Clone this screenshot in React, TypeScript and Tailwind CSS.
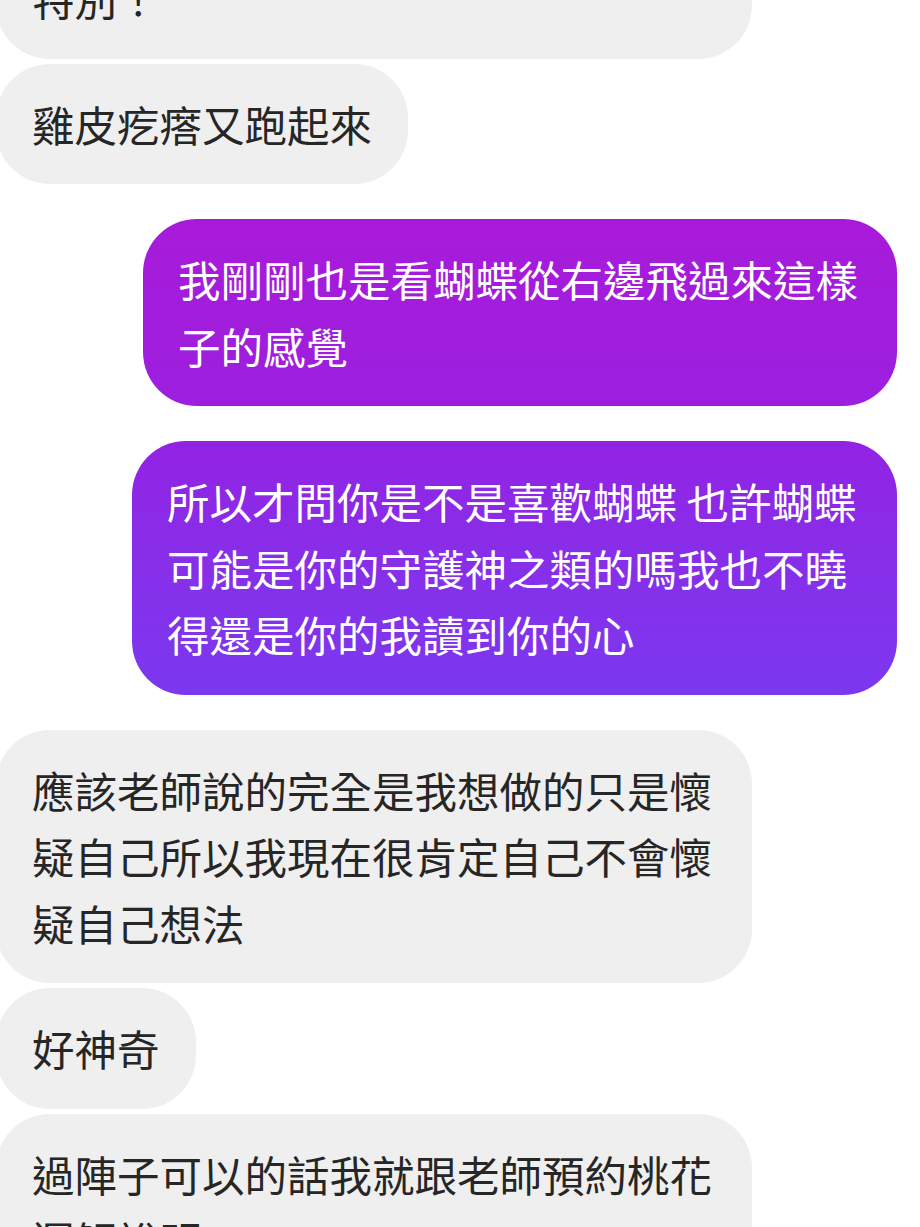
const font = { fontFamily: '"Noto Sans CJK TC", "Noto Sans", sans-serif' };

type Msg = {
  text: string;
  mine?: boolean;
  gap: 'sm' | 'lg';
  grad?: string;
  width?: string;
};

// wrapped bubbles get a fixed width, the way the app sizes them to the longest line
const messages: Msg[] = [
  { text: '雞皮疙瘩又跑起來', gap: 'sm' },
  {
    text: '我剛剛也是看蝴蝶從右邊飛過來這樣子的感覺',
    mine: true,
    gap: 'lg',
    grad: 'bg-gradient-to-b from-[#a81ad9] to-[#9c1fdf]',
    width: 'w-[754px]',
  },
  {
    text: '所以才問你是不是喜歡蝴蝶 也許蝴蝶可能是你的守護神之類的嗎我也不曉得還是你的我讀到你的心',
    mine: true,
    gap: 'lg',
    grad: 'bg-gradient-to-b from-[#9222e4] to-[#7b38ef]',
    width: 'w-[765px]',
  },
  {
    text: '應該老師說的完全是我想做的只是懷疑自己所以我現在很肯定自己不會懷疑自己想法',
    gap: 'lg',
    width: 'w-[756px]',
  },
  { text: '好神奇', gap: 'sm' },
  { text: '過陣子可以的話我就跟老師預約桃花運解說明', gap: 'sm', width: 'w-[756px]' },
];

const Bubble = ({ msg }: { msg: Msg }) => {
  const spacing = msg.gap === 'sm' ? 'mt-[5px]' : 'mt-[35px]';
  const width = msg.width ?? 'max-w-[775px]';
  if (msg.mine) {
    return (
      <div className={`flex justify-end pr-[23px] ${spacing}`}>
        <div
          className={`${width} rounded-[54px] px-[35px] py-[27px] text-white text-[42.5px] leading-[66.5px] ${msg.grad}`}
        >
          {msg.text}
        </div>
      </div>
    );
  }
  return (
    <div className={`flex justify-start -ml-[4px] ${spacing}`}>
      <div
        className={`${width} rounded-[54px] bg-[#efefef] px-[36px] py-[27px] text-[#262626] text-[42.5px] leading-[66.5px]`}
      >
        {msg.text}
      </div>
    </div>
  );
};

export default function App() {
  return (
    <div className="w-[920px] h-[1227px] overflow-hidden bg-white" style={font}>
      {/* top bubble, cut off by the screen edge */}
      <div className="flex justify-start -ml-[4px] -mt-[62px]">
        <div className="w-[756px] rounded-[54px] bg-[#efefef] px-[36px] py-[27px] text-[#262626] text-[42.5px] leading-[66.5px]">
          特別！
        </div>
      </div>
      {messages.map((m, i) => (
        <Bubble key={i} msg={m} />
      ))}
    </div>
  );
}
